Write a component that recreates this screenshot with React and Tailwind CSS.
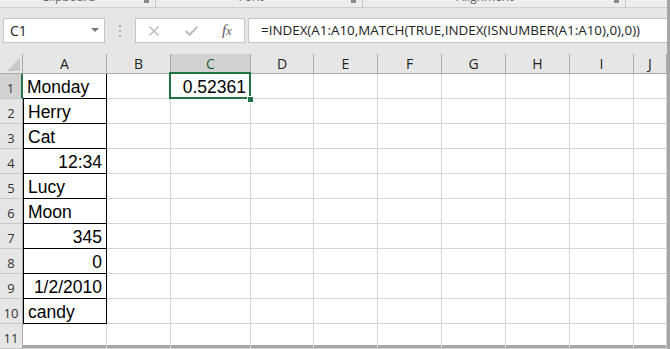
import React from "react";

const data = {
  1: ["Monday", "l"],
  2: ["Herry", "l"],
  3: ["Cat", "l"],
  4: ["12:34", "r"],
  5: ["Lucy", "l"],
  6: ["Moon", "l"],
  7: ["345", "r"],
  8: ["0", "r"],
  9: ["1/2/2010", "r"],
  10: ["candy", "l"],
};

const colLetters = ["A", "B", "C", "D", "E", "F", "G", "H", "I", "J"];
const gridCls =
  "grid grid-cols-[23px_84px_64px_80px_63px_64px_64px_64px_64px_64px_33px]";

function HeaderRow() {
  return (
    <div className={`${gridCls} h-[20px]`}>
      <div className="relative border-r border-b border-[#ababab] bg-[#e6e6e6]">
        <svg className="absolute left-0 top-0" width="23" height="20" viewBox="0 0 23 20">
          <polygon points="7,17 20,4 20,17" fill="#c8c8c8" />
        </svg>
      </div>
      {colLetters.map((c) => {
        const sel = c === "C";
        return (
          <div
            key={c}
            className={
              sel
                ? "flex items-center justify-center bg-[#d2d2d2] border-r border-[#ababab] border-b-2 border-b-[#217346] text-[14px] text-[#1f5c3b] leading-none"
                : "flex items-center justify-center bg-[#e6e6e6] border-r border-b border-[#ababab] text-[14px] text-[#222] leading-none"
            }
          >
            <span className="pt-[1px]">{c}</span>
          </div>
        );
      })}
    </div>
  );
}

function Row({ n }) {
  const d = data[n];
  const inA = n <= 10;
  return (
    <div className={`${gridCls} h-[25px]`}>
      <div
        className={
          n === 1
            ? "flex items-end justify-center pb-[3px] bg-[#d2d2d2] border-r-2 border-r-[#217346] border-b border-b-[#c8c8c8] text-[13px] text-[#333] leading-none"
            : "flex items-end justify-center pb-[3px] bg-[#e6e6e6] border-r border-r-[#ababab] border-b border-b-[#c8c8c8] text-[13px] text-[#333] leading-none"
        }
      >
        {n}
      </div>
      {inA ? (
        <div
          className={`flex items-end border-r border-b border-black text-[17.5px] leading-[22px] text-black font-['Liberation_Sans',sans-serif] ${
            n === 1 ? "" : "border-l border-l-black"
          } ${d[1] === "r" ? "justify-end pr-[4px]" : "justify-start pl-[4px]"}`}
        >
          {d[0]}
        </div>
      ) : (
        <div className="border-r border-b border-[#d4d4d4]" />
      )}
      <div className="border-r border-b border-[#d4d4d4]" />
      <div className="flex items-end justify-end pr-[4px] border-r border-b border-[#d4d4d4] text-[17.5px] leading-[22px] text-black font-['Liberation_Sans',sans-serif]">
        {n === 1 ? "0.52361" : ""}
      </div>
      {["D", "E", "F", "G", "H", "I", "J"].map((c) => (
        <div key={c} className="border-r border-b border-[#d4d4d4]" />
      ))}
    </div>
  );
}

function Group({ w, label, pr }) {
  return (
    <div className={`relative h-[7px] border-r border-[#c6c6c6] flex justify-center ${w} ${pr}`}>
      <span className="-mt-[10px] leading-[13px]">{label}</span>
      <span className="absolute right-[6px] top-0 w-[5px] h-[3px] bg-[#8a8a8a]" />
    </div>
  );
}

export default function App() {
  return (
    <div className="w-[670px] h-[349px] overflow-hidden flex flex-col bg-white font-['Open_Sans',sans-serif]">
      <div className="flex h-[345px]">
        <div className="w-[667px] relative">
          {/* ribbon strip */}
          <div className="h-[54px] bg-[#e6e6e6]">
            <div className="h-[8px] border-b border-[#d0d0d0] bg-[#ededed] overflow-hidden flex text-[12px] text-[#666]">
              <Group w="w-[156px]" pr="pr-[18px]" label="Clipboard" />
              <Group w="w-[207px]" pr="pr-[16px]" label="Font" />
              <Group w="w-[263px]" pr="pr-[18px]" label="Alignment" />
            </div>
            {/* formula bar */}
            <div className="flex items-center h-[25px] mt-[10px]">
              <div className="ml-[3px] w-[102px] h-[25px] bg-white border border-[#c6c6c6] flex items-center justify-between pl-[6px] pr-[5px] text-[14px] text-[#222]">
                <span>C1</span>
                <svg width="8" height="5" viewBox="0 0 8 5">
                  <polygon points="0,0 8,0 4,4" fill="#777" />
                </svg>
              </div>
              <div className="ml-[13px] w-[4px] flex flex-col items-center gap-[3px]">
                <span className="w-[2px] h-[2px] bg-[#b0b0b0]" />
                <span className="w-[2px] h-[2px] bg-[#b0b0b0]" />
                <span className="w-[2px] h-[2px] bg-[#b0b0b0]" />
              </div>
              <div className="ml-[13px] w-[110px] h-[25px] bg-white border border-[#c6c6c6] flex items-center">
                <svg className="ml-[13px]" width="10" height="10" viewBox="0 0 10 10">
                  <path d="M0.5 0.5 L9.5 9.5 M9.5 0.5 L0.5 9.5" stroke="#b4b4b4" strokeWidth="1.2" fill="none" />
                </svg>
                <svg className="ml-[26px]" width="13" height="10" viewBox="0 0 13 10">
                  <path d="M0.8 5 L4.5 8.8 L12.3 0.8" stroke="#b4b4b4" strokeWidth="1.8" fill="none" />
                </svg>
                <span className="ml-[24px] font-['Liberation_Serif',serif] italic text-[15px] leading-none text-[#555]">
                  f<span className="text-[12px]">x</span>
                </span>
              </div>
              <div className="ml-[3px] flex-1 h-[25px] bg-white border border-[#c6c6c6] border-r-0 flex items-center pl-[12px] text-[13.4px] text-[#222] whitespace-nowrap overflow-hidden">
                =INDEX(A1:A10,MATCH(TRUE,INDEX(ISNUMBER(A1:A10),0),0))
              </div>
            </div>
          </div>
          {/* sheet */}
          <HeaderRow />
          {[1, 2, 3, 4, 5, 6, 7, 8, 9, 10, 11].map((n) => (
            <Row key={n} n={n} />
          ))}
          {/* selection overlay */}
          <div className="absolute left-[169px] top-[72px] w-[82px] h-[27px] border-2 border-[#217346] pointer-events-none" />
          <div className="absolute left-[247px] top-[96px] w-[7px] h-[7px] bg-[#217346] border border-white pointer-events-none" />
        </div>
        <div className="w-[3px] bg-[#a6a6a6]" />
      </div>
      <div className="h-[4px] bg-[#a6a6a6]" />
    </div>
  );
}
